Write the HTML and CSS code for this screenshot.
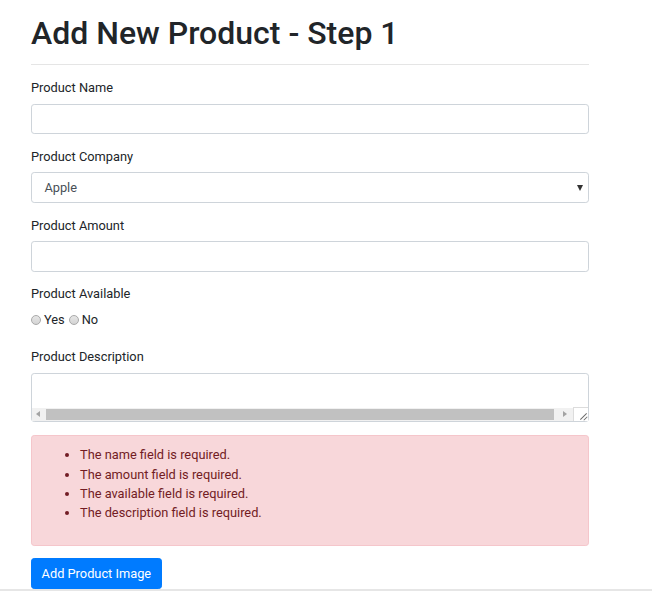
FILE: index.html
```html
<!DOCTYPE html>
<html lang="en">
<head>
<meta charset="utf-8">
<title>Add New Product - Step 1</title>
<link rel="stylesheet" href="styles.css">
</head>
<body>
<div class="page">
  <h1 class="title">Add New Product - Step 1</h1>
  <hr class="rule">
  <form class="form">
    <div class="form-group">
      <label class="label" for="name">Product Name</label>
      <input class="control" id="name" type="text">
    </div>
    <div class="form-group">
      <label class="label" for="company">Product Company</label>
      <div class="select-wrap">
        <select class="control select" id="company">
          <option>Apple</option>
          <option>Samsung</option>
        </select>
      </div>
    </div>
    <div class="form-group">
      <label class="label" for="amount">Product Amount</label>
      <input class="control" id="amount" type="text">
    </div>
    <div class="form-group radios-group">
      <label class="label">Product Available</label>
      <div class="radios">
        <label class="radio"><input type="radio" name="available" class="radio-input"> Yes</label>
        <label class="radio"><input type="radio" name="available" class="radio-input"> No</label>
      </div>
    </div>
    <div class="form-group">
      <label class="label" for="desc">Product Description</label>
      <div class="textarea-wrap">
        <textarea class="control textarea" id="desc" rows="2"></textarea>
        <div class="hscroll">
          <span class="sb-btn sb-left"></span>
          <span class="sb-track"><span class="sb-thumb"></span></span>
          <span class="sb-btn sb-right"></span>
          <span class="sb-corner"></span>
        </div>
      </div>
    </div>
    <div class="alert">
      <ul class="errors">
        <li>The name field is required.</li>
        <li>The amount field is required.</li>
        <li>The available field is required.</li>
        <li>The description field is required.</li>
      </ul>
    </div>
    <button type="button" class="btn">Add Product Image</button>
  </form>
</div>
<div class="bottom-line"></div>
</body>
</html>
```
FILE: styles.css
```css
* { box-sizing: border-box; }

html, body {
  margin: 0;
  padding: 0;
  background: #fff;
}

body {
  font-family: Roboto, "Liberation Sans", Arial, sans-serif;
  font-size: 12.8px;
  line-height: 19.2px;
  color: #212529;
}

.page {
  width: 558px;
  margin-left: 31px;
  padding-top: 14px;
}

.title {
  margin: 0 0 6.4px 0;
  font-size: 32px;
  font-weight: 500;
  line-height: 38.4px;
  color: #212529;
}

.rule {
  margin: 11.8px 0 12.8px 0;
  border: 0;
  border-top: 1px solid rgba(0, 0, 0, 0.1);
}

.form { margin: 0; }

.form-group { margin-bottom: 12.8px; }

.label {
  display: inline-block;
  margin-bottom: 6.4px;
}

.control {
  display: block;
  width: 100%;
  height: 30.4px;
  padding: 4.8px 9.6px;
  font-family: Roboto, "Liberation Sans", Arial, sans-serif;
  font-size: 12.8px;
  line-height: 19.2px;
  color: #495057;
  background: #fff;
  border: 1px solid #ced4da;
  border-radius: 3.2px;
  outline: none;
}

.select-wrap { position: relative; }

.select {
  -webkit-appearance: none;
  appearance: none;
  padding-left: 12.4px;
}

.select-wrap::after {
  content: "";
  position: absolute;
  right: 6px;
  top: 13px;
  border-left: 3px solid transparent;
  border-right: 3px solid transparent;
  border-top: 6px solid #333;
}

.radios-group { margin-bottom: 18.2px; }

.radios {
  display: flex;
  align-items: center;
  height: 19.2px;
}

.radio {
  display: inline-flex;
  align-items: center;
}

.radio + .radio { margin-left: 4px; }

.radio-input {
  -webkit-appearance: none;
  appearance: none;
  width: 10px;
  height: 10px;
  margin: 0 3px 0 0;
  border: 1px solid #a9a9a9;
  border-radius: 50%;
  background: linear-gradient(#e6e6e6, #d4d4d4);
}

.textarea-wrap {
  position: relative;
}

.textarea {
  height: 49px;
  resize: none;
  overflow: hidden;
}

.hscroll {
  position: absolute;
  left: 1px;
  right: 1px;
  bottom: 1px;
  height: 13px;
  display: flex;
  background: #f1f1f1;
}

.sb-btn {
  position: relative;
  width: 14px;
  flex: none;
}

.sb-left::after,
.sb-right::after {
  content: "";
  position: absolute;
  top: 3.5px;
  border-top: 3px solid transparent;
  border-bottom: 3px solid transparent;
}

.sb-left::after {
  left: 4px;
  border-right: 4px solid #a3a3a3;
}

.sb-right { width: 15px; }

.sb-right::after {
  left: 5px;
  border-left: 4px solid #a3a3a3;
}

.sb-track {
  flex: 1;
  display: flex;
  padding: 1px 4px 1px 0;
}

.sb-thumb {
  flex: 1;
  background: #c1c1c1;
}

.sb-corner {
  position: relative;
  width: 15px;
  flex: none;
  background: #fff;
  border-left: 1px solid #dcdcdc;
  border-top: 1px solid #dcdcdc;
  margin-top: -1px;
  height: 14px;
}

.sb-corner::before,
.sb-corner::after {
  content: "";
  position: absolute;
  height: 1px;
  background: #6b6b6b;
  transform: rotate(-45deg);
}

.sb-corner::before {
  width: 9px;
  right: 0;
  bottom: 4px;
}

.sb-corner::after {
  width: 5px;
  right: 0;
  bottom: 2px;
}

.alert {
  margin-bottom: 12.8px;
  padding: 9.6px 16px;
  color: #721c24;
  background: #f8d7da;
  border: 1px solid #f5c6cb;
  border-radius: 3.2px;
}

.errors {
  margin: 0 0 12.8px 0;
  padding-left: 32px;
}

.btn {
  display: inline-block;
  height: 30.4px;
  padding: 4.8px 9.6px;
  font-family: Roboto, "Liberation Sans", Arial, sans-serif;
  font-size: 12.8px;
  line-height: 19.2px;
  color: #fff;
  background: #007bff;
  border: 1px solid #007bff;
  border-radius: 3.2px;
  cursor: pointer;
}

.bottom-line {
  position: fixed;
  left: 0;
  right: 0;
  bottom: 0;
  height: 2px;
  background: #e6e6e6;
}
```
